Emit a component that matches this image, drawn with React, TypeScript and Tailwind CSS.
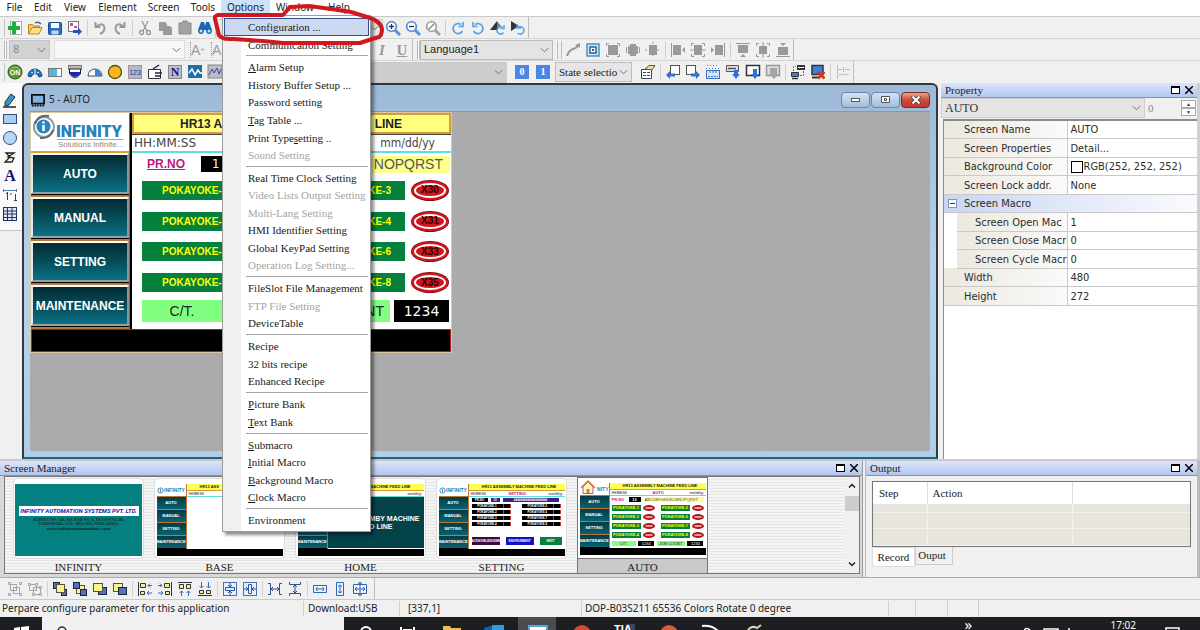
import React from "react";

const serif = "font-['Liberation_Serif',serif]";
const sans = "font-['Liberation_Sans',sans-serif]";
const condensed = "font-['DejaVu_Sans_Condensed','DejaVu_Sans',sans-serif]";
const dejavu = "font-['DejaVu_Sans',sans-serif]";

/* ---------- icons, all drawn on a 16x16 grid ---------- */

const grayBox = (x: number, y: number, w: number, h: number) => (
  <rect x={x} y={y} width={w} height={h} fill="#9a9a9a" />
);

const lens = (color: string) => (
  <>
    <path d="M10 10l5 5" stroke={color} strokeWidth="3" />
    <circle cx="6.5" cy="6.5" r="4.8" fill="#fff" stroke={color} strokeWidth="1.8" />
  </>
);

const dashes = (
  <path d="M1.5 4V1.500h2.500M12 1.500h2.500V4M14.500 12v2.500H12M4 14.500H1.500V12" stroke="#999" fill="none" />
);

const icons: Record<string, React.ReactNode> = {
  New: (
    <>
      <path d="M3.500 1.500h11v13h-11z" fill="#fff" stroke="#aaa" />
      <path d="M5 2h4v4h4v4H9v4H5v-4H1V6h4z" fill="#1fae3a" />
    </>
  ),
  Open: (
    <>
      <path d="M1.500 14V4.500h4l1 1.500h6v2" fill="#f4cf70" stroke="#b98a1d" />
      <path d="M1.500 14L5 7.500h10L12 14z" fill="#ffe08a" stroke="#b98a1d" />
      <path d="M8 3q3-2 6 1" stroke="#4a6a8a" strokeWidth="1.500" fill="none" />
    </>
  ),
  Save: (
    <>
      <rect x="1.500" y="2.500" width="13" height="12" rx="1" fill="#2b6cc4" stroke="#174a91" />
      <rect x="4" y="3" width="8" height="5" fill="#fff" />
      <rect x="4.500" y="10.500" width="7" height="4" fill="#bcd7f5" />
    </>
  ),
  Export: (
    <>
      <rect x="1.500" y="1.500" width="10" height="10" fill="#fff" stroke="#777" />
      <path d="M3 3h3v3H3zM7 6h3v2H7z" fill="#c54ba8" />
      <path d="M6 10h5V7.500l4 4-4 4V13H6z" fill="#2d4fc0" />
    </>
  ),
  Undo: <path d="M3.500 2v5h5M4.500 6.500q7-5 8 1.500 0 4-4.500 6" stroke="#999" strokeWidth="2" fill="none" />,
  Redo: <path d="M12.500 2v5h-5M11.500 6.500q-7-5-8 1.500 0 4 4.500 6" stroke="#999" strokeWidth="2" fill="none" />,
  Cut: (
    <g stroke="#999" fill="none" strokeWidth="1.300">
      <path d="M5 1l5 10M11 1L6 11" />
      <circle cx="4.500" cy="12.500" r="2" />
      <circle cx="11.500" cy="12.500" r="2" />
    </g>
  ),
  Copy: <path d="M2 2h6l2 2v2h3l2 2v7H6v-4H2z" fill="#9a9a9a" />,
  Paste: <path d="M2 3h3l1-2h4l1 2h3v11H2z" fill="#a3a3a3" stroke="#8b8b8b" />,
  Find: (
    <g fill="#1667b4">
      <path d="M4 2h3l1 4 1-4h3l3 8q0 4-3 4t-3-4H7q0 4-3 4t-3-4z" />
      <circle cx="4" cy="11" r="1.500" fill="#bfe0ff" />
      <circle cx="12" cy="11" r="1.500" fill="#bfe0ff" />
    </g>
  ),
  "Zoom in": (
    <>
      {lens("#5b8fe0")}
      <path d="M4 6.500h5M6.500 4v5" stroke="#333" strokeWidth="1.300" />
    </>
  ),
  "Zoom out": (
    <>
      {lens("#5b8fe0")}
      <path d="M4 6.500h5" stroke="#333" strokeWidth="1.300" />
    </>
  ),
  "Zoom reset": (
    <>
      {lens("#a5a5a5")}
      <path d="M3.500 9.500l6-6" stroke="#888" strokeWidth="1.500" />
    </>
  ),
  "Rotate right": (
    <path d="M12.500 11A5 5 0 1 1 11 4.500M13 2v4.500H8.500" stroke="#5aa2e6" strokeWidth="1.700" fill="none" />
  ),
  "Rotate left": (
    <path d="M3.500 11A5 5 0 1 0 5 4.500M3 2v4.500h4.500" stroke="#5aa2e6" strokeWidth="1.700" fill="none" />
  ),
  "Flip up": (
    <>
      <path d="M7 1v9H0z" fill="#333" />
      <path d="M7 1l4 5-4 4z" fill="#777" />
      <path d="M13.500 12.500a3.500 3.500 0 1 1-1-5M14 5v3.500h-3.500" stroke="#5aa2e6" strokeWidth="1.500" fill="none" />
    </>
  ),
  "Flip side": (
    <>
      <path d="M1 1l8 5-8 5z" fill="#333" />
      <path d="M7.500 13a3.700 3.700 0 1 0 1-6M7 4v4h4" stroke="#5aa2e6" strokeWidth="1.500" fill="none" />
    </>
  ),
  Line: (
    <>
      <path d="M2 14q2-6 6-7t5-4" stroke="#999" strokeWidth="2" fill="none" />
      <path d="M15 1v5l-5-3z" fill="#999" />
    </>
  ),
  Frame: (
    <>
      <rect x="2" y="2" width="12" height="12" fill="#cfe8fa" stroke="#4a90c4" strokeWidth="1.500" />
      <rect x="5" y="5" width="6" height="6" fill="#fff" stroke="#28618f" strokeWidth="1.500" />
      <rect x="7" y="7" width="2" height="2" fill="#28618f" />
    </>
  ),
  "Size both": <>{dashes}{grayBox(3, 3, 10, 10)}</>,
  "Size wide": <><path d="M1.500 5v6M14.500 5v6" stroke="#999" />{grayBox(3, 4, 10, 8)}{grayBox(5, 2, 6, 12)}</>,
  "Size tall": <><path d="M0 8h16M8 0v16" stroke="#999" strokeDasharray="2 2" />{grayBox(4, 3, 8, 10)}</>,
  "Dock left": <><path d="M1.500 1v14" stroke="#999" />{grayBox(3, 3, 8, 10)}<path d="M15 5v6l-3-3z" fill="#999" /></>,
  "Dock center": <>{dashes}{grayBox(4, 3, 8, 10)}<path d="M0 8h16" stroke="#999" /></>,
  "Dock right": <><path d="M14.500 1v14" stroke="#999" />{grayBox(5, 3, 8, 10)}<path d="M1 5v6l3-3z" fill="#999" /></>,
  "Dock top": <><path d="M1 1.500h14" stroke="#999" />{grayBox(3, 3, 10, 8)}<path d="M5 15h6l-3-3z" fill="#999" /></>,
  "Dock middle": <>{dashes}{grayBox(4, 4, 8, 8)}<path d="M8 0v16" stroke="#999" /></>,
  "Dock bottom": <><path d="M1 14.500h14" stroke="#999" />{grayBox(3, 5, 10, 8)}<path d="M5 1h6L8 4z" fill="#999" /></>,
  On: (
    <>
      <circle cx="8" cy="8" r="7" fill="#5d9b2d" stroke="#2c5312" />
      <path d="M3 6q5-6 10 0" stroke="#a9d37f" fill="none" />
      <text x="8" y="11" fontSize="7" fontWeight="bold" textAnchor="middle" fill="#fff" fontFamily="Liberation Sans">ON</text>
    </>
  ),
  Meter: (
    <>
      <path d="M1 12a7 7 0 0 1 14 0l-3 1-2-3H6l-2 3z" fill="#1976bf" stroke="#114a80" />
      <path d="M8 5v7M4 8l2 1M12 8l-2 1" stroke="#fff" />
    </>
  ),
  Bar: (
    <>
      <rect x="1.500" y="4.500" width="13" height="8" fill="#fff" stroke="#777" />
      <rect x="2" y="5" width="8" height="7" fill="#58b3e2" />
    </>
  ),
  Tank: (
    <>
      <rect x="1.500" y="1.500" width="13" height="4" fill="#bbb" stroke="#777" />
      <path d="M2.500 5h11v5q-5.500 7-11 0z" fill="#fff" stroke="#223" />
      <path d="M3 8h10v2q-5 6-10 0z" fill="#1628b4" />
    </>
  ),
  Gauge: (
    <>
      <path d="M1 12a7 7 0 0 1 14 0z" fill="#fff" stroke="#356" />
      <path d="M8 12V5a7 7 0 0 1 6.500 7z" fill="#3c86c9" />
    </>
  ),
  Lamp: <circle cx="8" cy="8" r="6.500" fill="#f5b71c" stroke="#5b4a14" strokeWidth="1.300" />,
  Numeric: (
    <>
      <rect x="1.500" y="1.500" width="13" height="13" fill="#b8b8c8" stroke="#999" />
      <text x="8" y="10.500" fontSize="7" textAnchor="middle" fill="#223388" fontFamily="Liberation Sans">123</text>
    </>
  ),
  Input: (
    <>
      <path d="M1.500 5.500h12v9h-12z" fill="#fff" stroke="#333" />
      <path d="M6 5l6-4M8 9h7M8 12h6" stroke="#224" strokeWidth="1.500" />
    </>
  ),
  Name: (
    <>
      <rect x="1.500" y="1.500" width="13" height="13" fill="#bcbccf" stroke="#888" />
      <text x="8" y="12" fontSize="12" fontWeight="bold" textAnchor="middle" fill="#16217b" fontFamily="Liberation Serif">N</text>
    </>
  ),
  Trend: (
    <>
      <rect x="1" y="1" width="14" height="13" fill="#1d6fa8" />
      <path d="M2 9l3-4 3 6 3-5 2 3h2" stroke="#fff" strokeWidth="1.500" fill="none" />
    </>
  ),
  Curve: (
    <>
      <rect x="1" y="1" width="14" height="13" fill="#bcbccf" stroke="#888" />
      <path d="M2 11l3-6 2 4 3-5 2 6 2-5" stroke="#448" fill="none" />
    </>
  ),
  Properties: (
    <>
      <path d="M1.500 5.500h10v9h-10z" fill="#fff" stroke="#345" />
      <path d="M3 8.500h3M7 8.500h3M3 11.500h3M7 11.500h3" stroke="#345" />
      <path d="M5 5l4-3.500h6l-3 4.500z" fill="#ecd9a6" stroke="#654" />
    </>
  ),
  "Go back": (
    <>
      <rect x="5.500" y="1.500" width="9" height="9" fill="#fff" stroke="#555" />
      <path d="M1 11l4-4v2.500h5v3H5V15z" fill="#2f6fdc" />
    </>
  ),
  "Go next": (
    <>
      <rect x="1.500" y="1.500" width="9" height="9" fill="#fff" stroke="#555" />
      <path d="M15 11l-4-4v2.500H6v3h5V15z" fill="#2f6fdc" />
    </>
  ),
  Compile: (
    <>
      <rect x="1.500" y="6.500" width="13" height="8" fill="#d5e5fb" stroke="#3f6fc0" />
      <path d="M1 4.500h14M2 1.500h12" stroke="#3f7fdc" strokeDasharray="1 2" />
      <path d="M5 7v3M8 7v3M11 7v3M3 12.500h10" stroke="#3f6fc0" strokeDasharray="2 1" />
    </>
  ),
  "Download all": (
    <>
      <path d="M1.500 1.500h12v6h-12z" fill="#ddd" stroke="#555" />
      <path d="M3 4.500h8" stroke="#555" strokeWidth="1.500" />
      <path d="M9 6h4v4h2l-4 5-4-5h2z" fill="#2f6fdc" />
    </>
  ),
  "Download screen": (
    <>
      <rect x="1.500" y="1.500" width="13" height="10" fill="#fff" stroke="#333" strokeWidth="1.500" />
      <path d="M8 5h4v5h2l-4 5-4-5h2z" fill="#2f6fdc" />
    </>
  ),
  "Download recipe": (
    <>
      <path d="M1.500 1.500h13v10h-13z" fill="#ddd" stroke="#999" strokeWidth="1.500" />
      <path d="M5 4h7v6h2l-5 5-5-5h1z" fill="#a5a5a5" />
    </>
  ),
  "On-line": (
    <>
      <path d="M7 1h8v5H7z" fill="#333" />
      <path d="M8 3.500h6" stroke="#fff" />
      <path d="M1.500 8.500h7v4h-7z" fill="#3f7fe0" stroke="#333" />
      <path d="M2 14.500h6" stroke="#333" strokeWidth="1.500" />
      <path d="M3.500 7V2.500H6M10 11.500h3.500V7" stroke="#3f6fc0" strokeDasharray="2 1" fill="none" />
    </>
  ),
  "Off-line": (
    <>
      <rect x="2" y="1.500" width="11" height="9" fill="#3f7fe0" stroke="#333" strokeWidth="1.500" />
      <path d="M2 13.500h7" stroke="#333" strokeWidth="2" />
      <path d="M8 8l6.500 6.500M14.500 8L8 14.500" stroke="#d63414" strokeWidth="2.500" />
    </>
  ),
  Ruler: <path d="M2.500 1v14M3 5.500h4M8.500 3v5M10 5.500h5M4 11l2-1 2 1 2-1 2 1 2-1" stroke="#bdbdbd" fill="none" />,
  Pen: (
    <>
      <path d="M3 10l6-8 4 3-6 8-4 1z" fill="#3d93c6" stroke="#134" />
      <path d="M1 15h13" stroke="#222" strokeWidth="1.500" />
    </>
  ),
  Rectangle: <rect x="1.500" y="3.500" width="13" height="9" fill="#a9cdf5" stroke="#2c4f80" />,
  Ellipse: <circle cx="8" cy="8" r="6.500" fill="#b7d7f8" stroke="#2c4f80" />,
  Polygon: <path d="M4 4h8L6 8l6 1-2 4-7 0 5-5z" stroke="#222" strokeWidth="1.300" fill="none" />,
  Text: (
    <text x="8" y="13" fontSize="16" fontWeight="bold" textAnchor="middle" fill="#14146e" fontFamily="Liberation Serif">A</text>
  ),
  Scale: (
    <>
      <path d="M1 3.500h14M1.500 2v3M14.500 2v3" stroke="#4b80b5" fill="none" />
      <path d="M5.500 5v8M4 6.500h1M13.500 7v6M12 13.500h3M8 7h2" stroke="#345" fill="none" />
    </>
  ),
  Table: (
    <>
      <rect x="1.500" y="1.500" width="13" height="13" fill="#dfe9f8" stroke="#223366" />
      <path d="M1 5h14M1 8h14M1 11.500h14M5.500 1v14M10 1v14" stroke="#223366" />
    </>
  ),
  Group: (
    <>
      <path d="M3.500 3.500h6v6h-6zM6.500 6.500h6v6h-6z" stroke="#a6a6a6" fill="none" />
      <path d="M1.500 1.500h2v2h-2zM12.500 1.500h2v2h-2zM1.500 12.500h2v2h-2zM12.500 12.500h2v2h-2z" stroke="#a6a6a6" fill="#f0f0f0" />
    </>
  ),
  Ungroup: (
    <>
      <path d="M2.500 3.500h7v6h-7zM6.500 6.500h7v7h-7z" stroke="#a6a6a6" fill="none" />
      <path d="M1.500 2.500h2v2h-2zM8.500 2.500h2v2h-2zM12.500 5.500h2v2h-2zM5.500 12.500h2v2h-2zM12.500 12.500h2v2h-2z" stroke="#a6a6a6" fill="#f0f0f0" />
    </>
  ),
  "To front": (
    <>
      <rect x="1.500" y="1.500" width="6" height="6" fill="#4b74c9" stroke="#223" />
      <rect x="9.500" y="8.500" width="5" height="6" fill="#4b74c9" stroke="#223" />
      <rect x="4.500" y="3.500" width="8" height="8" fill="#fbf48b" stroke="#554" />
    </>
  ),
  "To back": (
    <>
      <rect x="4.500" y="4.500" width="8" height="8" fill="#fbf48b" stroke="#554" />
      <rect x="1.500" y="1.500" width="6" height="6" fill="#4b74c9" stroke="#223" />
      <rect x="8.500" y="8.500" width="6" height="6" fill="#4b74c9" stroke="#223" />
    </>
  ),
  Forward: (
    <>
      <rect x="6.500" y="6.500" width="8" height="7" fill="#4b74c9" stroke="#223" />
      <rect x="1.500" y="2.500" width="9" height="8" fill="#fbf48b" stroke="#554" />
    </>
  ),
  Backward: (
    <>
      <rect x="1.500" y="2.500" width="9" height="8" fill="#fbf48b" stroke="#554" />
      <rect x="6.500" y="6.500" width="8" height="7" fill="#4b74c9" stroke="#223" />
    </>
  ),
  "Align left": (
    <>
      <path d="M1.500 1v14" stroke="#333" />
      <path d="M3.500 2.500h5v4h-5zM3.500 10.500h4v3h-4z" fill="#f7ef86" stroke="#333" />
      <path d="M15 4.500h-4l2-2M11 4.500l2 2M15 12h-5l2-2M10 12l2 2" stroke="#3b68c4" fill="none" />
    </>
  ),
  "Align right": (
    <>
      <path d="M14.500 1v14" stroke="#333" />
      <path d="M7.500 2.500h5v4h-5zM8.500 10.500h4v3h-4z" fill="#f7ef86" stroke="#333" />
      <path d="M1 4.500h4l-2-2M5 4.500l-2 2M1 12h5l-2-2M6 12l-2 2" stroke="#3b68c4" fill="none" />
    </>
  ),
  "Align top": (
    <>
      <path d="M1 1.500h14" stroke="#333" />
      <path d="M2.500 3.500h4v4h-4zM9.500 3.500h4v4h-4z" fill="#f7ef86" stroke="#333" />
      <path d="M4.500 15v-5l-2 2M4.500 10l2 2M11.500 15v-5l-2 2M11.500 10l2 2" stroke="#3b68c4" fill="none" />
    </>
  ),
  "Align bottom": (
    <>
      <path d="M1 14.500h14" stroke="#333" />
      <path d="M2.500 9.500h4v3h-4zM9.500 9.500h4v3h-4z" fill="#f7ef86" stroke="#333" />
      <path d="M4.500 1v6l-2-2M4.500 7l2-2M11.500 1v6l-2-2M11.500 7l2-2" stroke="#3b68c4" fill="none" />
    </>
  ),
  "Center vertical": (
    <>
      <rect x="1.500" y="1.500" width="13" height="13" fill="#e8f0fc" stroke="#4a6fae" />
      <path d="M3.500 6.500h9v3h-9zM8 2v4M8 14v-4M6 4l2 2 2-2M6 12l2-2 2 2" stroke="#2a55a8" fill="none" />
    </>
  ),
  "Center horizontal": (
    <>
      <rect x="1.500" y="1.500" width="13" height="13" fill="#e8f0fc" stroke="#4a6fae" />
      <path d="M6.500 3.500h3v9h-3zM2 8h4M14 8h-4M4 6l2 2-2 2M12 6l-2 2 2 2" stroke="#2a55a8" fill="none" />
    </>
  ),
  "Space across": <path d="M1 2.500h2.500v11H1M15 2.500h-2.500v11H15M4 8h8M6 6L4 8l2 2M10 6l2 2-2 2" stroke="#2f4f8f" fill="none" />,
  "Space down": <path d="M2.500 1v2.500h11V1M2.500 15v-2.500h11V15M8 4v8M6 6l2-2 2 2M6 10l2 2 2-2" stroke="#2f4f8f" fill="none" />,
  "Same width": <path d="M1.500 4.500h13v7h-13zM4 8h8M5.500 6L4 8l1.500 2M10.500 6L12 8l-1.500 2" stroke="#2f66b8" fill="#eaf2fd" />,
  "Same height": <path d="M4.500 1.500h7v13h-7zM8 4v8M6 5.500L8 4l2 1.500M6 10.500L8 12l2-1.500" stroke="#2f66b8" fill="#eaf2fd" />,
  "Same size": <path d="M1.500 3.500h13v9h-13zM3 8h10M8 1v14M5 6L3 8l2 2M11 6l2 2-2 2M6 3l2-2 2 2M6 13l2 2 2-2" stroke="#2f66b8" fill="none" />,
};

function Tool({ name }: { name: string }) {
  return (
    <button aria-label={name} className="flex h-[19px] w-5 shrink-0 items-center justify-center">
      <svg viewBox="0 0 16 16" className="h-4 w-4">{icons[name]}</svg>
    </button>
  );
}

/* "|" in the list stands for a separator */
function Tools({ names }: { names: string[] }) {
  return (
    <>
      {names.map((name, i) =>
        name === "|" ? (
          <span key={i} className="mx-[2px] h-4 w-px shrink-0 bg-[#cfcfcf]" />
        ) : (
          <Tool key={i} name={name} />
        )
      )}
    </>
  );
}

function Grip() {
  return <span className="h-[18px] w-[3px] shrink-0 border-x border-[#b5b5b5] bg-white" />;
}

function Combo({ label, value, className }: { label: string; value: string; className: string }) {
  return (
    <span className={`relative flex shrink-0 items-center border ${className}`}>
      <select aria-label={label} className="h-full w-full appearance-none bg-transparent pl-[3px] pr-[10px] outline-none">
        <option>{value}</option>
      </select>
      <svg viewBox="0 0 10 6" className="pointer-events-none absolute right-[3px] h-[6px] w-[9px]">
        <path d="M1 1l4 4 4-4" stroke="#666" fill="none" />
      </svg>
    </span>
  );
}

/* ---------- options menu ---------- */

type Item = { text: string; mark?: number; off?: boolean };

const menuGroups: { height: string; items: Item[] }[] = [
  {
    height: "h-[111px]",
    items: [
      { text: "Alarm Setup", mark: 0 },
      { text: "History Buffer Setup ..." },
      { text: "Password setting" },
      { text: "Tag Table ...", mark: 0 },
      { text: "Print Typesetting ..", mark: 10 },
      { text: "Sound Setting", off: true },
    ],
  },
  {
    height: "h-[110px]",
    items: [
      { text: "Real Time Clock Setting" },
      { text: "Video Lists Output Setting", off: true },
      { text: "Multi-Lang Setting", off: true },
      { text: "HMI Identifier Setting" },
      { text: "Global KeyPad Setting" },
      { text: "Operation Log Setting...", off: true },
    ],
  },
  {
    height: "h-[58px]",
    items: [{ text: "FileSlot File Management" }, { text: "FTP File Setting", off: true }, { text: "DeviceTable" }],
  },
  {
    height: "h-[58px]",
    items: [{ text: "Recipe" }, { text: "32 bits recipe" }, { text: "Enhanced Recipe" }],
  },
  { height: "h-[41px]", items: [{ text: "Picture Bank", mark: 0 }, { text: "Text Bank", mark: 0 }] },
  {
    height: "h-[75px]",
    items: [
      { text: "Submacro", mark: 0 },
      { text: "Initial Macro", mark: 0 },
      { text: "Background Macro", mark: 0 },
      { text: "Clock Macro", mark: 0 },
    ],
  },
  { height: "h-[23px]", items: [{ text: "Environment" }] },
];

function MenuItem({ text, mark, off }: Item) {
  return (
    <button
      role="menuitem"
      disabled={off}
      className={`flex-1 pl-[2px] text-left whitespace-pre ${off ? "text-[#a5a5a5]" : "text-[#1a1a1a]"}`}
    >
      {mark === undefined ? (
        text
      ) : (
        <>
          {text.slice(0, mark)}
          <u>{text[mark]}</u>
          {text.slice(mark + 1)}
        </>
      )}
    </button>
  );
}

function OptionsMenu() {
  return (
    <div className={`absolute left-px top-[15px] z-20 w-[149px] border border-[#9c9c9c] bg-gradient-to-r from-[#f0f0f0] from-[18px] to-white to-[18px] text-[11px] leading-3 shadow-[3px_3px_3px_rgba(0,0,0,0.45)] ${serif}`}>
      <div role="menu" className="flex flex-col">
        <div className="flex h-[39px] flex-col pt-[2px]">
          <button role="menuitem" className="mx-px h-[18px] border border-[#2f4f94] bg-[#cdd9f1] pl-[23px] text-left">
            Configuration ...
          </button>
          <button role="menuitem" className="h-[18px] pl-[25px] text-left">
            Communication Setting
          </button>
        </div>
        {menuGroups.map((group, i) => (
          <div
            key={i}
            className={`ml-[23px] mr-[2px] flex flex-col border-t border-[#a6a6a6] py-[2px] ${group.height}`}
          >
            {group.items.map((item) => (
              <MenuItem key={item.text} {...item} />
            ))}
          </div>
        ))}
      </div>
      {/* hand-drawn marker round the first entry */}
      <svg viewBox="0 0 180 44" className="pointer-events-none absolute -left-3 -top-3 h-[44px] w-[180px]">
        <path
          d="M4 15q-1-3 3-4l45 0 20 0L79 3l19-1 22 3 20 3 16 5q14 4 15 12 0 6-3 8l-10 3-9 3-77 0-20-2-30-2q-15 1-15-8z"
          fill="none"
          stroke="#cf1820"
          strokeWidth="4"
          strokeLinejoin="round"
        />
      </svg>
    </div>
  );
}

function MenuBar() {
  return (
    <nav className="relative z-20 flex h-4 items-start bg-white text-[10px] leading-[14px] text-[#222]">
      <button className="w-[29px]">File</button>
      <button className="w-[28px]">Edit</button>
      <button className="w-[36px]">View</button>
      <button className="w-[49px]">Element</button>
      <button className="w-[43px]">Screen</button>
      <button className="w-[36px]">Tools</button>
      <div className="relative">
        <button className="block w-[49px] bg-[#cbe3f8]">Options</button>
        <OptionsMenu />
      </div>
      <button className="w-[50px]">Window</button>
      <button className="w-[38px]">Help</button>
    </nav>
  );
}

/* ---------- top toolbars ---------- */

function Toolbars() {
  return (
    <div className="border-t border-[#c9c9c9] bg-[#f0f0f0] text-[#333]">
      <div className="flex h-[22px] items-center border-b border-[#d4d4d4] pl-1">
        <span className="h-[18px] w-px bg-[#c4c4c4]" />
        <Tools names={["New", "Open", "Save", "Export", "|", "Undo", "Redo", "|", "Cut", "Copy", "Paste", "Find"]} />
        <Combo label="Zoom" value="" className="h-[18px] w-[168px] border-[#c9c9c9] bg-[#e9e9e9] text-[10px]" />
        <Tools names={["Zoom in", "Zoom out", "Zoom reset", "|", "Rotate right", "Rotate left", "Flip up", "Flip side"]} />
        <span className="h-full w-px bg-[#bdbdbd]" />
      </div>
      <div className="flex h-[22px] items-center border-b border-[#d4d4d4] pl-1">
        <Grip />
        <Combo label="Font size" value="8" className="ml-[2px] h-[19px] w-[41px] border-[#c4c4c4] bg-[#d2d2d2] text-[11px] text-[#888]" />
        <Combo label="Font" value="" className="mx-1 h-[19px] w-[131px] border-[#ddd] bg-[#f7f7f7]" />
        <div className={`ml-px flex gap-px text-[14px] leading-4 text-[#999] ${sans}`}>
          <button className="flex h-4 w-5 items-center border-l border-dotted border-[#999]">A<span className="text-[8px]">+</span></button>
          <button className="flex h-4 w-5 items-center border-l border-dotted border-[#999]">A<span className="text-[8px]">-</span></button>
        </div>
        <div className={`ml-[141px] flex text-[15px] font-bold leading-4 text-[#999] ${serif}`}>
          <button className="w-5 italic">I</button>
          <button className="w-5 underline">U</button>
        </div>
        <span className="mr-1 h-full w-px bg-[#bdbdbd]" />
        <Grip />
        <Combo label="Language" value="Language1" className={`h-5 w-[133px] border-[#bcbcbc] bg-[#e4e4e4] text-[11px] text-[#222] ${sans}`} />
        <span className="ml-1 mr-[3px] h-[18px] w-px bg-[#bdbdbd]" />
        <span className="mr-px h-[18px] w-px bg-[#bdbdbd]" />
        <Tools
          names={[
            "Line", "Frame", "Size both", "Size wide", "Size tall", "|",
            "Dock left", "Dock center", "Dock right", "|", "Dock top", "Dock middle", "Dock bottom",
          ]}
        />
        <span className="h-full w-px bg-[#bdbdbd]" />
      </div>
      <div className="flex h-[22px] items-center pl-1">
        <span className="h-[18px] w-px bg-[#c4c4c4]" />
        <Tools names={["On", "Meter", "Bar", "Tank", "Gauge", "Lamp", "Numeric", "Input", "Name", "Trend", "Curve"]} />
        <Combo label="Element state" value="" className="mr-1 h-[21px] w-[282px] border-[#c9c9c9] bg-[#cdcdcd]" />
        <div className={`flex gap-[7px] text-[10px] font-bold leading-3 text-white ${serif}`}>
          <button className="ml-1 h-[14px] w-[14px] bg-[#4c86e4]">0</button>
          <button className="h-[14px] w-[14px] bg-[#4c86e4]">1</button>
        </div>
        <Combo label="State" value="State selectio" className={`ml-[5px] mr-[6px] h-5 w-[77px] border-[#bcbcbc] bg-[#e6e6e6] text-[11px] text-[#222] ${serif}`} />
        <Tools
          names={[
            "Properties", "|", "Go back", "Go next", "Compile", "Download all", "Download screen",
            "Download recipe", "|", "On-line", "Off-line", "|", "Ruler",
          ]}
        />
        <span className="h-full w-px bg-[#bdbdbd]" />
      </div>
    </div>
  );
}

/* ---------- HMI screen in the editor ---------- */

function Logo() {
  return (
    <svg viewBox="0 0 98 37" className="h-[37px] w-full">
      <circle cx="13" cy="14" r="10" fill="#fff" stroke="#9a9a9a" strokeWidth="2" />
      <path d="M4 11q3-10 14-8M22 17q-3 9-13 8" stroke="#666" strokeWidth="2" fill="none" />
      <circle cx="12.500" cy="13.500" r="7" fill="#2a84bd" />
      <path d="M12.500 8.500v2M12.500 12v6" stroke="#fff" strokeWidth="2.500" />
      <text x="25" y="24" fontSize="16" fontWeight="900" fill="#2382bb" fontFamily="Roboto">
        INFINITY
      </text>
      <path d="M26 26.500h66" stroke="#9aa" />
      <text x="27" y="34" fontSize="8" fill="#888" fontFamily="Liberation Sans">Solutions Infinite...</text>
    </svg>
  );
}

/* the labels stop where the open menu covers them */
const rows = [
  { left: "POKAYOKE-", right: "KE-3", lamp: "X30" },
  { left: "POKAYOKE-", right: "KE-4", lamp: "X31" },
  { left: "POKAYOKE-", right: "KE-6", lamp: "X33" },
  { left: "POKAYOKE-", right: "KE-8", lamp: "X35" },
];

function Lamp({ text }: { text: string }) {
  return (
    <span className="flex h-[21px] w-[38px] items-center justify-center rounded-[50%] bg-[#8d0c12] p-px">
      <span className="flex h-full w-full items-center justify-center rounded-[50%] border-2 border-[#d81820] bg-white p-[2px]">
        <span className="flex h-full w-full items-center justify-center rounded-[50%] bg-[#d0161c] text-[10px] leading-3 text-[#2a0002]">
          {text}
        </span>
      </span>
    </span>
  );
}

function HmiScreen() {
  return (
    <div className={`w-[422px] border border-[#d8c9a0] bg-black ${sans}`}>
      <div className="flex">
        <div className="w-[99px] shrink-0 border-r border-[#a06018]">
          <div className="h-10 border-b-2 border-[#e0a030] bg-white"><Logo /></div>
          {["AUTO", "MANUAL", "SETTING", "MAINTENANCE"].map((name) => (
            <div key={name} className="h-11 border-b-2 border-[#b87838] pb-px">
              <button className="h-full w-full border-2 border-b-[#8fa3a8] border-l-[#e8e8e8] border-r-[#8f9498] border-t-white bg-gradient-to-b from-[#032b33] to-[#0b7184] text-[12px] font-bold text-white">
                {name}
              </button>
            </div>
          ))}
        </div>
        <div className="ml-[2px] min-w-0 flex-1 bg-white">
          <div className="flex h-[21px] items-center justify-between border-2 border-[#d79a36] bg-[#ffff7d] pl-[46px] pr-[47px] text-[12px] font-bold text-[#222]">
            <span>HR13 A</span>
            <span>LINE</span>
          </div>
          <div className={`flex h-[19px] items-center justify-between border-b-2 border-[#5fdede] border-t border-t-[#444] pl-[2px] pr-4 text-[12px] text-[#444] ${dejavu}`}>
            <span>HH:MM:SS</span>
            <span className={condensed}>mm/dd/yy</span>
          </div>
          <div className="flex h-[22px] items-center pl-[15px] pr-px">
            <span className="text-[12px] font-bold text-[#c2187e] underline">PR.NO</span>
            <span className={`ml-4 h-4 w-[60px] bg-black pl-[11px] text-[13px] leading-4 text-white ${condensed}`}>1</span>
            <span className="ml-auto bg-[#ffff8c] pl-3 pr-[7px] text-[14px] leading-[17px] text-[#555]">NOPQRST</span>
          </div>
          <div className="flex h-[123px] flex-col justify-around pl-[10px] pr-[2px] text-[10px] font-bold text-[#ffff00]">
            {rows.map((row) => (
              <div key={row.lamp} className="flex items-center">
                <span className="h-[19px] w-[104px] bg-[#05803d] pl-5 leading-[20px]">{row.left}</span>
                <span className="ml-auto mr-[6px] h-[19px] w-[104px] bg-[#05803d] pr-[14px] text-right leading-[20px]">
                  {row.right}
                </span>
                <Lamp text={row.lamp} />
              </div>
            ))}
          </div>
          <div className="flex h-[26px] items-center pl-[10px] pr-[2px] text-[14px] text-[#222]">
            <span className="h-[22px] w-[80px] bg-[#80ff80] text-center leading-[23px]">C/T.</span>
            <span className="ml-auto mr-1 h-[22px] w-[120px] bg-[#80ff80] pr-[6px] text-right leading-[23px]">NT</span>
            <span className={`h-[22px] w-[55px] bg-black text-center leading-[22px] text-white ${dejavu}`}>1234</span>
          </div>
        </div>
      </div>
      <div className="h-[23px] border border-[#b01f18] bg-black" />
    </div>
  );
}

function EditorWindow() {
  return (
    <section className="flex min-w-0 flex-1 flex-col rounded-t-md border-2 border-[#33383d] border-b-[#2b5f80] bg-gradient-to-b from-[#9db9d8] via-[#b9d1ea] to-[#aecfea] px-[6px] pb-[6px]">
      <header className="flex h-[26px] items-center pl-[1px] pt-[3px] text-[10px] text-[#222]">
        <svg viewBox="0 0 16 16" className="mr-1 h-4 w-[14px]">
          <path d="M1 2h14v10H1z" fill="#7fb3dd" stroke="#111" strokeWidth="2" />
          <path d="M1 14.500h14" stroke="#111" strokeWidth="2" strokeDasharray="2 1" />
        </svg>
        <h1>5 - AUTO</h1>
        <div className="ml-auto flex gap-px">
          <button aria-label="Minimize" className="flex h-4 w-[29px] items-center justify-center rounded-sm border border-[#6c87a6] bg-gradient-to-b from-[#d3e2f2] to-[#a3bedb]">
            <span className="h-1 w-[9px] border border-[#555] bg-white" />
          </button>
          <button aria-label="Restore" className="flex h-4 w-[29px] items-center justify-center rounded-sm border border-[#6c87a6] bg-gradient-to-b from-[#d3e2f2] to-[#a3bedb]">
            <svg viewBox="0 0 9 7" className="h-[7px] w-[9px]">
              <path d="M.5.5h8v6h-8z" fill="#fff" stroke="#555" />
              <path d="M3.500 2.500h2v2h-2z" fill="#fff" stroke="#555" />
            </svg>
          </button>
          <button aria-label="Close" className="flex h-4 w-[29px] items-center justify-center rounded-sm border border-[#7b2a20] bg-gradient-to-b from-[#e4a498] via-[#cb4b38] to-[#c0392b]">
            <svg viewBox="0 0 10 8" className="h-2 w-[10px]">
              <path d="M1 0l8 8M9 0L1 8" stroke="#444" strokeWidth="3.500" />
              <path d="M1.500.5l7 7M8.500.5l-7 7" stroke="#fff" strokeWidth="2" />
            </svg>
          </button>
        </div>
      </header>
      <div className="flex-1 border-t border-[#8698aa] bg-[#ababab]">
        <HmiScreen />
      </div>
    </section>
  );
}

/* ---------- docked panels ---------- */

function PanelTitle({ title }: { title: string }) {
  return (
    <header className={`flex h-[15px] items-center border-b border-[#7f94bf] bg-gradient-to-b from-[#dbe5fb] to-[#b3c6ee] px-1 text-[11px] text-[#1c1c1c] ${serif}`}>
      <h2 className="flex-1">{title}</h2>
      <button aria-label={`Maximize ${title}`} className="mr-[5px] h-2 w-[9px] border border-t-2 border-black bg-white" />
      <button aria-label={`Close ${title}`}>
        <svg viewBox="0 0 8 8" className="h-2 w-2">
          <path d="M0 0l8 8M8 0L0 8" stroke="#000" strokeWidth="1.500" />
        </svg>
      </button>
    </header>
  );
}

const macros = [
  ["Screen Open Mac", "1"],
  ["Screen Close Macr", "0"],
  ["Screen Cycle Macr", "0"],
];

function Row({ name, children }: { name: string; children: React.ReactNode }) {
  return (
    <tr className="border-b border-[#c9c9c9]">
      <th colSpan={2} className="border-r border-[#c9c9c9] bg-gradient-to-r from-[#ece8df] to-[#fbfafa] pl-5 text-left font-normal">
        {name}
      </th>
      <td className="whitespace-nowrap pl-[3px]">{children}</td>
    </tr>
  );
}

function PropertyPanel() {
  return (
    <aside className="ml-[3px] flex w-[259px] shrink-0 flex-col border-r-[3px] border-[#d0d0d0] bg-[#f0f0f0]">
      <PanelTitle title="Property" />
      <div className="flex h-5 text-[12px] text-[#333]">
        <Combo label="Object" value="AUTO" className={`flex-1 border-[#cfcfcf] bg-[#e4e4e4] ${serif}`} />
        <div className="flex w-[52px] items-center justify-between pl-[3px]">
          <input aria-label="Index" defaultValue="0" className={`w-6 bg-transparent text-[11px] text-[#888] outline-none ${serif}`} />
          <span className="flex flex-col pr-px text-[5px] leading-[6px]">
            <button aria-label="Up" className="h-2 w-[15px] border border-[#aaa] bg-white">▲</button>
            <button aria-label="Down" className="h-2 w-[15px] border border-[#aaa] bg-white">▼</button>
          </span>
        </div>
      </div>
      <div className="ml-[2px] mt-px flex-1 border-l border-t-2 border-[#8c8c8c] bg-white">
        <table className={`h-[185px] w-full table-fixed border-collapse text-[11px] leading-[15px] text-[#2c2c2c] ${condensed}`}>
          <colgroup>
            <col className="w-[13px]" />
            <col className="w-[110px]" />
            <col />
          </colgroup>
          <tbody>
            <Row name="Screen Name">AUTO</Row>
            <Row name="Screen Properties">Detail...</Row>
            <Row name="Background Color">
              <span className="flex items-center gap-px">
                <span className="h-3 w-3 shrink-0 border border-black" />
                RGB(252, 252, 252)
              </span>
            </Row>
            <Row name="Screen Lock addr.">None</Row>
            <tr className="border-b border-[#c9c9c9] bg-gradient-to-r from-[#c9d5f2] to-[#fafbff]">
              <th colSpan={3} className="text-left font-normal">
                <span className="flex items-center">
                  <button aria-label="Collapse Screen Macro" className="ml-1 mr-[7px] flex h-[9px] w-[9px] items-center justify-center border border-[#7a96c8] bg-white">
                    <span className="h-px w-[5px] bg-[#335]" />
                  </button>
                  Screen Macro
                </span>
              </th>
            </tr>
            {macros.map(([name, value]) => (
              <tr key={name}>
                <td className="bg-white" />
                <th className="whitespace-nowrap border-b border-r border-[#c9c9c9] bg-gradient-to-r from-[#ece8df] to-[#fbfafa] pl-[18px] text-left font-normal">
                  {name}
                </th>
                <td className="border-b border-[#c9c9c9] pl-[3px]">{value}</td>
              </tr>
            ))}
            <Row name="Width">480</Row>
            <Row name="Height">272</Row>
          </tbody>
        </table>
      </div>
    </aside>
  );
}

/* ---------- screen manager ---------- */

const nav = ["AUTO", "MANUAL", "SETTING", "MAINTENANCE"];

type MiniProps = {
  heading?: string;
  align?: string;
  title?: string;
  clock?: string;
  date?: string;
  logo?: boolean;
  buttons?: string[];
  home?: boolean;
  children?: React.ReactNode;
};

function MiniFrame({
  heading = "HR13 ASSEMBLY MACHINE FEED LINE",
  align = "text-center",
  title = "",
  clock = "HH:MM:SS",
  date = "mm/dd/yy",
  logo = true,
  buttons = nav,
  home,
  children,
}: MiniProps) {
  return (
    <div className={`relative h-[72px] w-[126px] bg-black font-bold ${sans}`}>
      <div className="flex h-[65px]">
        <div className="w-[30px] shrink-0 border-r border-[#b87838]">
          <div className="flex h-3 items-center justify-center bg-white text-[5px] leading-3 text-[#2382bb]">
            {logo && (
              <>
                {!home && (
                  <svg viewBox="0 0 8 8" className="h-[7px] w-[7px] shrink-0">
                    <circle cx="4" cy="4" r="3" fill="#fff" stroke="#2382bb" />
                    <path d="M4 2v4" stroke="#2382bb" />
                  </svg>
                )}
                <span className={home ? "ml-auto" : ""}>{home ? "NITY" : "INFINITY"}</span>
              </>
            )}
          </div>
          {buttons.map((name, i) => (
            <div key={i} className="flex h-[13px] items-center justify-center border-t border-[#b87838] bg-gradient-to-b from-[#043c46] to-[#0a6270] text-[4px] text-white">
              {name}
            </div>
          ))}
        </div>
        <div className="min-w-0 flex-1 bg-white">
          <div className={`h-[7px] border-b border-[#d79a36] bg-[#ffff50] px-[13px] text-[4px] leading-[6px] whitespace-nowrap text-[#222] ${align}`}>
            {heading}
          </div>
          <div className="flex h-[6px] items-center justify-between border-b border-[#5fdede] px-[2px] text-[3px] leading-[4px] text-[#555]">
            <span>{clock}</span>
            <span className="text-[4px] text-[#c2187e]">{title}</span>
            <span>{date}</span>
          </div>
          {children}
        </div>
      </div>
      {home && (
        <svg viewBox="0 0 16 14" className="absolute -top-[3px] left-0 h-[14px] w-4">
          <path d="M3 7v6.500h10V7L8 2z" fill="#fff4c4" stroke="#9a62a8" />
          <path d="M1 8l7-7 7 7" fill="none" stroke="#d8822a" strokeWidth="1.500" />
          <path d="M6.500 13V9h3v4" fill="#d8822a" />
        </svg>
      )}
    </div>
  );
}

function InfinityThumb() {
  return (
    <div className={`flex h-[72px] w-[127px] flex-col items-center bg-[#058080] pt-[22px] text-center ${serif}`}>
      <div className="h-[10px] w-[120px] bg-white font-['Roboto',sans-serif] text-[6px] font-bold italic leading-[10px] whitespace-nowrap text-[#1a1ac0]">
        INFINITY AUTOMATION SYSTEMS PVT. LTD.
      </div>
      <p className="mt-[2px] text-[4px] font-bold leading-[4px] text-[#052c2c]">SURVEY NO. 148, SECTOR NO. 8, JIVAN NAGAR,</p>
      <p className="text-[4px] font-bold leading-[4px] text-[#052c2c]">TATHAWADE, TAL- MULSHI, PUNE-411033.</p>
      <p className="text-[5px] font-bold leading-[5px] text-[#052c2c]">www.infinityautomations.com</p>
    </div>
  );
}

function SettingBody() {
  return (
    <div className="flex flex-col gap-[2px] px-[3px] pt-px text-[3px] leading-[4px] text-white">
      <div className="flex gap-[3px]">
        <span className="w-4 bg-black text-center">PR.NO</span>
        <span className="w-[9px] bg-[#3a1f8f] text-center">12</span>
        <span className="w-[56px] bg-[#3a1f8f] text-center">####################</span>
      </div>
      {[1, 2, 3, 4].map((n) => (
        <div key={n} className="flex justify-between">
          <span className="w-[31px] bg-black text-center">POKAYOKE-{n}</span>
          <span className="mr-[10px] h-1 w-2 border-x border-[#c33] bg-black" />
          <span className="w-[31px] bg-black text-center">POKAYOKE-{n + 4}</span>
          <span className="h-1 w-2 border-x border-[#c33] bg-black" />
        </div>
      ))}
      <div className="mt-[9px] flex justify-between text-center leading-[8px]">
        <span className="h-2 w-[28px] bg-[#3d0a40]">ACKNOWLEDGEMENT</span>
        <span className="h-2 w-[28px] bg-[#1212c4]">ENVIRONMENT</span>
        <span className="h-2 w-[22px] bg-[#05803d]">NEXT</span>
      </div>
    </div>
  );
}

function AutoBody() {
  return (
    <div className="flex flex-col gap-[3px] px-[2px] pt-px text-[4px] leading-[5px]">
      <div className="flex items-center">
        <span className="w-[17px] text-[#c2187e]">PR.NO</span>
        <span className="mr-1 w-3 bg-black text-center text-white">12</span>
        <span className="flex-1 bg-[#ffff8c] font-normal text-[#555]">ABCDEFGHIJKLMNOPQRST</span>
      </div>
      {[1, 2, 3, 4].map((n) => (
        <div key={n} className="flex h-[6px] items-center justify-between text-[#ff0]">
          <span className="h-[6px] w-[29px] bg-[#05803d] text-center leading-[6px]">POKAYOKE-{n}</span>
          <span className="mr-1 h-[6px] w-3 rounded-[50%] border-2 border-[#b01820] bg-[#e8a0a0]" />
          <span className="h-[6px] w-[29px] bg-[#05803d] text-center leading-[6px]">POKAYOKE-{n + 4}</span>
          <span className="h-[6px] w-3 rounded-[50%] border-2 border-[#b01820] bg-[#e8a0a0]" />
        </div>
      ))}
      <div className="flex justify-between text-center font-normal text-[#222]">
        <span className="w-6 bg-[#80ff80]">C/T.</span>
        <span className="w-4 bg-black text-white">1234</span>
        <span className="w-7 bg-[#80ff80]">JOB COUNT</span>
        <span className="w-4 bg-black text-white">1234</span>
      </div>
    </div>
  );
}

function Thumb({ name, selected, children }: { name: string; selected?: boolean; children: React.ReactNode }) {
  return (
    <button className={`flex w-[131px] shrink-0 flex-col items-center ${selected ? "border-x border-t border-[#777] bg-[#c9c9c9]" : "pt-px"}`}>
      <span className={`flex h-[82px] w-full justify-center bg-white pt-[5px] text-left ${selected ? "border-b border-[#777]" : "rounded-[5px] border border-[#ddd]"}`}>
        {children}
      </span>
      <span className={`mt-[2px] text-[11px] leading-[12px] text-[#222] ${serif}`}>{name}</span>
    </button>
  );
}

function ScreenManager() {
  return (
    <section className="flex min-w-0 flex-1 flex-col border-r border-[#999] bg-[#d8d8d8]">
      <PanelTitle title="Screen Manager" />
      <div className="ml-1 mr-[2px] flex h-[98px] border border-[#777] bg-[repeating-linear-gradient(#f4f4f4_0px,#f4f4f4_2px,#e6e6e6_2px,#e6e6e6_3px)]">
        <div className="flex min-w-0 flex-1 gap-[10px] overflow-hidden pl-[8px]">
          <Thumb name="INFINITY"><InfinityThumb /></Thumb>
          <Thumb name="BASE">
            <MiniFrame heading="HR13 ASS" align="text-left" date="" />
          </Thumb>
          <Thumb name="HOME">
            <MiniFrame
              heading="MACHINE FEED LINE"
              align="text-right"
              clock=""
              logo={false}
              buttons={["", "", "", "MAINTENANCE"]}
            >
              <div className="flex h-[51px] items-center justify-end bg-[#04434a] pr-1 text-[7px] leading-[8px] text-white">
                <span>
                  MBY MACHINE
                  <br />
                  D LINE
                </span>
              </div>
            </MiniFrame>
          </Thumb>
          <Thumb name="SETTING"><MiniFrame title="SETTING"><SettingBody /></MiniFrame></Thumb>
          <Thumb name="AUTO" selected><MiniFrame title="AUTO" home><AutoBody /></MiniFrame></Thumb>
        </div>
        <div className="flex w-[14px] flex-col items-center bg-[#f0f0f0] py-[6px]">
          <button aria-label="Scroll up" className="flex">
            <svg viewBox="0 0 8 5" className="h-[5px] w-2"><path d="M1 4.500l3-3 3 3" stroke="#222" strokeWidth="1.500" fill="none" /></svg>
          </button>
          <span className="mt-2 h-[15px] w-[14px] bg-[#cdcdcd]" />
          <button aria-label="Scroll down" className="mt-auto flex">
            <svg viewBox="0 0 8 5" className="h-[5px] w-2"><path d="M1 .5l3 3 3-3" stroke="#222" strokeWidth="1.500" fill="none" /></svg>
          </button>
        </div>
      </div>
    </section>
  );
}

function OutputPanel() {
  return (
    <section className={`ml-[2px] flex w-[335px] shrink-0 flex-col border-l border-r-[3px] border-[#b9b9b9] bg-[#f0f0f0] text-[11px] text-[#222] ${serif}`}>
      <PanelTitle title="Output" />
      <div className="mx-[6px] mt-[5px] border border-[#777] bg-[#e7e5dd]">
        <table className="h-[64px] w-full table-fixed border-collapse">
          <colgroup>
            <col className="w-[54px]" />
            <col className="w-[145px]" />
            <col />
          </colgroup>
          <thead>
            <tr className="h-[22px] bg-white text-left">
              <th className="border-r border-[#ddd] pl-[6px] font-normal">Step</th>
              <th className="border-r border-[#ddd] pl-[5px] font-normal">Action</th>
              <th />
            </tr>
          </thead>
          <tbody>
            {[1, 2, 3].map((n) => (
              <tr key={n}>
                <td className="border-b border-r border-[#f3f2ed]" />
                <td className="border-b border-r border-[#f3f2ed]" />
                <td className="border-b border-[#f3f2ed]" />
              </tr>
            ))}
          </tbody>
        </table>
      </div>
      <div className="ml-[6px] flex items-start">
        <button className="h-5 w-[43px] border border-[#ddd] bg-white">Record</button>
        <button className="h-[18px] w-[38px] border border-t-0 border-[#ccc] pr-1">Ouput</button>
      </div>
    </section>
  );
}

/* ---------- bottom bars ---------- */

function StatusBar() {
  return (
    <footer className="flex h-[18px] items-center border-t border-[#c9c9c9] bg-[#f0f0f0] pl-[2px] text-[10px] text-[#222]">
      <span className="w-[302px] border-r border-[#cfcfcf] whitespace-nowrap">Perpare configure parameter for this application</span>
      <span className="w-[96px] border-r border-[#cfcfcf] pl-1">Download:USB</span>
      <span className="w-[182px] border-r border-[#cfcfcf] pl-2">[337,1]</span>
      <span className="w-[307px] border-r border-[#cfcfcf] pl-[3px]">DOP-B03S211 65536 Colors Rotate 0 degree</span>
      <span className="h-full w-[27px] border-r border-[#cfcfcf]" />
      <span className="h-full w-8 border-r border-[#cfcfcf]" />
      <span className="h-full w-[31px] border-r border-[#cfcfcf]" />
    </footer>
  );
}

/* only the top edge of the task bar is on the screen */
function TaskBar() {
  return (
    <div className="flex h-[13px] overflow-hidden bg-[#1d1e22] text-white">
      <button aria-label="Start" className="w-[42px] shrink-0">
        <svg viewBox="0 0 42 13" className="h-[13px] w-[42px]">
          <path d="M14 11l6-1v3h-6zM21 10l8-1v4h-8z" fill="#fff" />
        </svg>
      </button>
      <div className="w-[302px] shrink-0 bg-[#f1f1f1]">
        <svg viewBox="0 0 40 13" className="h-[13px] w-10">
          <circle cx="20" cy="14" r="4" fill="none" stroke="#333" strokeWidth="1.500" />
        </svg>
      </div>
      <svg viewBox="0 0 456 13" className="h-[13px] w-[456px] shrink-0">
        <circle cx="22" cy="15" r="5" fill="none" stroke="#fff" strokeWidth="2" />
        <path d="M57 10v3M59 13h9M70 10v3" stroke="#fff" strokeWidth="2" />
        <path d="M99 9h7l1 2h10v3H99z" fill="#f2bd45" />
        <path d="M140 11l10-3v6h-10z" fill="#0f5ea8" />
        <path d="M148 8h12v5h-12z" fill="#2c9be8" />
        <rect x="174" y="0" width="38" height="13" fill="#4b4c50" />
        <path d="M185 9h18v5h-18z" fill="#fff" stroke="#4fa7dd" strokeWidth="2" />
        <circle cx="238" cy="17" r="9" fill="#d9453d" />
        <rect x="282" y="7" width="9" height="6" fill="#3c4568" />
        <text x="270" y="16" fontSize="11" fontWeight="bold" fill="#fff" fontFamily="Liberation Sans">TIA</text>
        <circle cx="325" cy="17" r="9" fill="#e0573a" />
        <path d="M358 9q10-1 16 5" stroke="#fff" strokeWidth="2" fill="none" />
        <path d="M404 13q4-5 9-2l4-3" stroke="#d9d3b8" strokeWidth="2" fill="none" />
      </svg>
      <div className="ml-auto flex pr-[14px]">
        <button aria-label="Show hidden icons" className="w-[60px] text-left text-[15px] leading-[12px]">»</button>
        <svg viewBox="0 0 86 13" className="h-[13px] w-[86px]">
          <path d="M0 13q3-3 6 0M20 13v-1h14v1M45 11v2" stroke="#fff" strokeWidth="1.500" fill="none" />
        </svg>
        <span className="text-[10px] leading-[16px]">17:02</span>
        <svg viewBox="0 0 50 13" className="h-[13px] w-[50px]">
          <path d="M30 13v-2h13v2" stroke="#fff" strokeWidth="1.500" fill="none" />
        </svg>
      </div>
    </div>
  );
}

export default function App() {
  return (
    <div className="flex min-h-screen flex-col overflow-hidden bg-[#f0f0f0] font-['Noto_Sans',sans-serif]">
      <MenuBar />
      <Toolbars />
      <main className="flex flex-1 border-b-2 border-[#c9c9c9]">
        <div className="w-[22px] shrink-0">
          <div className="flex h-[148px] flex-col border-b border-[#c4c4c4] bg-[#fafafa] pt-[7px]">
            {["Pen", "Rectangle", "Ellipse", "Polygon", "Text", "Scale", "Table"].map((name) => (
              <Tool key={name} name={name} />
            ))}
          </div>
        </div>
        <EditorWindow />
        <PropertyPanel />
      </main>
      <div className="flex h-[116px]">
        <ScreenManager />
        <OutputPanel />
      </div>
      <div className="flex h-[22px] items-center border-t border-[#aaa] pl-[5px]">
        <Tools
          names={[
            "Group", "Ungroup", "|", "To front", "To back", "Forward", "Backward", "|",
            "Align left", "Align right", "Align top", "Align bottom", "|",
            "Center vertical", "Center horizontal", "|", "Space across", "Space down", "|",
            "Same width", "Same height", "Same size",
          ]}
        />
        <span className="ml-1 h-full w-px bg-[#bdbdbd]" />
      </div>
      <StatusBar />
      <TaskBar />
    </div>
  );
}
